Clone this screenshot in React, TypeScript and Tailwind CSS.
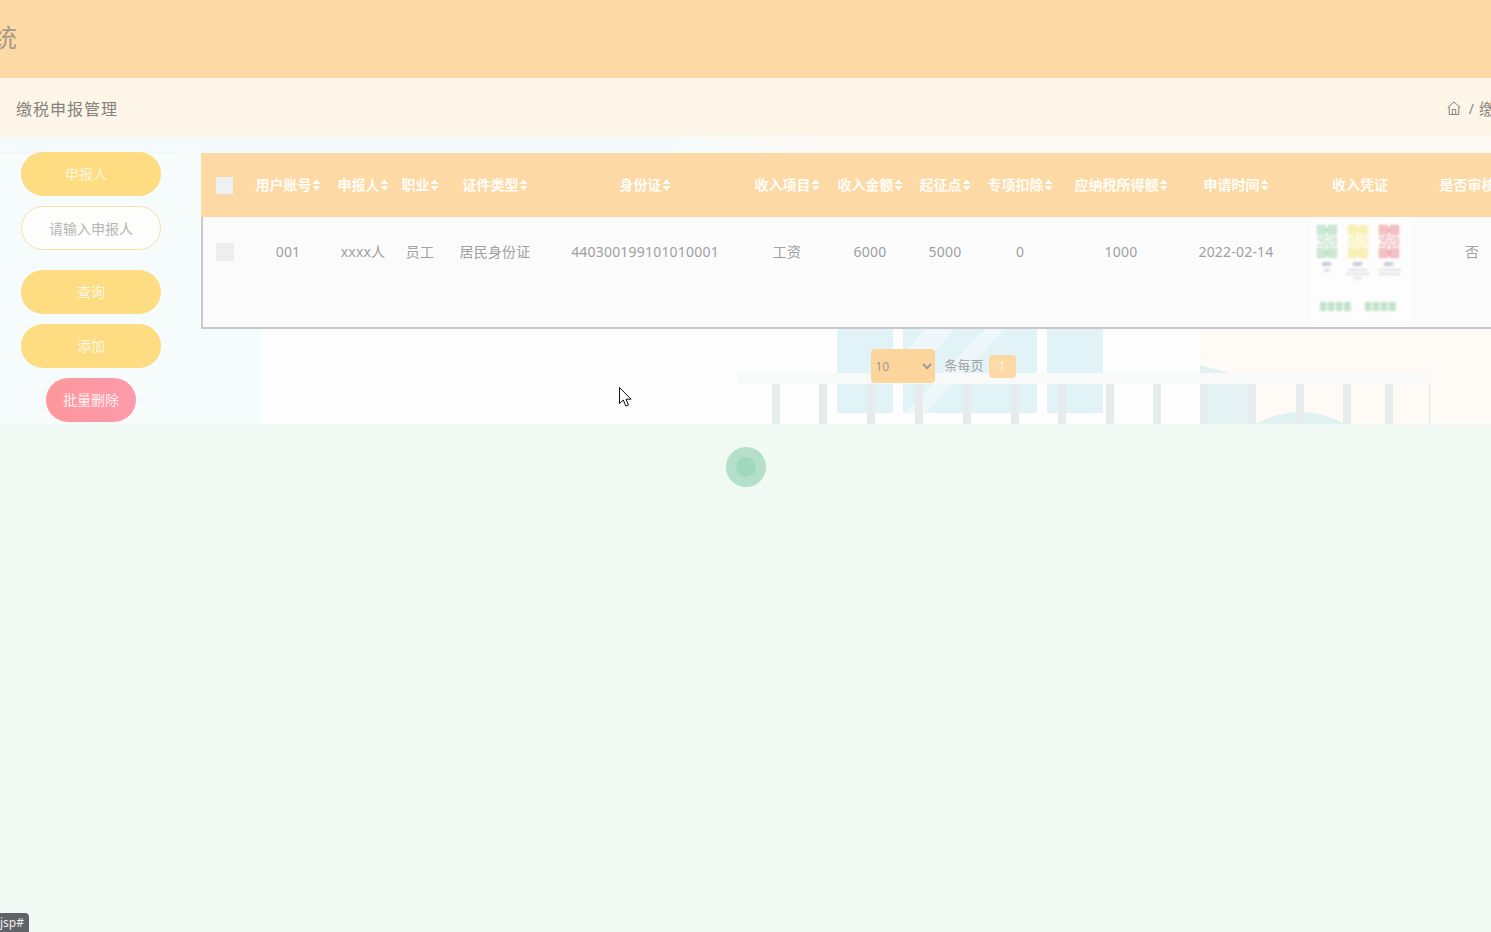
import { Fragment } from "react";

const columns = [
  { label: "用户账号", value: "001", width: "w-[82px]" },
  { label: "申报人", value: "xxxx人", width: "w-[68px]" },
  { label: "职业", value: "员工", width: "w-[46px]" },
  { label: "证件类型", value: "居民身份证", width: "w-[104px]" },
  { label: "身份证", value: "440300199101010001", width: "w-[196px]" },
  { label: "收入项目", value: "工资", width: "w-[88px]" },
  { label: "收入金额", value: "6000", width: "w-[78px]" },
  { label: "起征点", value: "5000", width: "w-[72px]" },
  { label: "专项扣除", value: "0", width: "w-[78px]" },
  { label: "应纳税所得额", value: "1000", width: "w-[124px]" },
  { label: "申请时间", value: "2022-02-14", width: "w-[106px]" },
];

const legs = [772, 819, 867, 915, 963, 1011, 1058, 1106, 1153, 1200, 1248, 1296, 1343, 1385];

function SortIcon() {
  return (
    <svg width="9" height="12" viewBox="0 0 9 12" className="inline-block align-[-1px]">
      <path d="M4.5 0.5 8.5 5H0.5Z M0.5 7H8.5L4.5 11.5Z" fill="#ffffff" />
    </svg>
  );
}

// 收入凭证里的二维码缩略图，看不清内容，只画色块
function Qr({ x, color }: { x: number; color: string }) {
  const cells = [
    [0, 0, 9, 10], [11, 0, 9, 10], [0, 23, 9, 10], [11, 23, 9, 10],
    [9, 3, 2, 4], [0, 12, 4, 2], [5, 11, 3, 3], [9, 11, 4, 2], [14, 12, 6, 2],
    [2, 15, 6, 2], [9, 15, 2, 4], [12, 15, 4, 2], [17, 15, 3, 3], [0, 19, 5, 2],
    [6, 19, 3, 3], [11, 19, 3, 3], [15, 19, 5, 2], [9, 25, 2, 6],
  ];
  return (
    <g transform={`translate(${x} 5)`} fill={color}>
      {cells.map((c, i) => (
        <Fragment key={i}>
          <rect x={c[0]} y={c[1]} width={c[2]} height={c[3]} />
          {c[2] === 9 && <rect x={c[0] + 2} y={c[1] + 2} width={5} height={6} fill="#f7f7f2" opacity="0.7" />}
          {c[2] === 9 && <rect x={c[0] + 3} y={c[1] + 3} width={3} height={4} />}
        </Fragment>
      ))}
    </g>
  );
}

function Voucher() {
  return (
    <svg width="100" height="102" viewBox="0 0 100 102" className="block">
      <rect width="100" height="102" fill="#fdfdfd" />
      <g className="blur-[0.8px]">
        <Qr x={6} color="#bfe2c8" />
        <Qr x={37} color="#f8eea6" />
        <Qr x={68} color="#f0b0b6" />
        <g fill="#c9ccd6">
          <rect x="11" y="42" width="9" height="4" />
          <rect x="42" y="42" width="9" height="4" />
          <rect x="73" y="42" width="9" height="4" />
        </g>
        <g fill="#e0e1e6">
          <rect x="13" y="49" width="6" height="3" />
          <rect x="37" y="49" width="20" height="2" />
          <rect x="35" y="53" width="24" height="2" />
          <rect x="42" y="57" width="9" height="2" />
          <rect x="67" y="49" width="23" height="2" />
          <rect x="68" y="53" width="21" height="2" />
        </g>
        <g fill="#bfe2c8">
          {[9, 17, 25, 33, 54, 62, 70, 78].map((x) => (
            <rect key={x} x={x} y="82" width="6.5" height="9" />
          ))}
        </g>
      </g>
    </svg>
  );
}

function Background() {
  return (
    <svg width="1491" height="287" viewBox="0 137 1491 287" className="absolute inset-0">
      <defs>
        <linearGradient id="strip" x1="0" x2="1" y1="0" y2="0">
          <stop offset="0.45" stopColor="#f5fbfc" />
          <stop offset="0.55" stopColor="#fdfaf6" />
        </linearGradient>
      </defs>
      <rect x="0" y="137" width="1491" height="287" fill="#f6fbfc" />
      <rect x="262" y="153" width="1229" height="271" fill="#fdfdfd" />
      <rect x="0" y="137" width="1491" height="16" fill="url(#strip)" />
      <rect x="1200" y="329" width="291" height="95" fill="#fefbf6" />
      <rect x="837" y="329" width="56" height="44" fill="#e2f3f7" />
      <rect x="903" y="329" width="134" height="44" fill="#e2f3f7" />
      <rect x="1047" y="329" width="56" height="44" fill="#e2f3f7" />
      <rect x="837" y="384" width="56" height="29" fill="#e2f3f7" />
      <rect x="903" y="384" width="134" height="29" fill="#e2f3f7" />
      <rect x="1047" y="384" width="56" height="29" fill="#e2f3f7" />
      <path d="M925 329H955L905 384H903V355Z M985 329H1005L925 413H905Z" fill="#eef8fa" />
      <rect x="738" y="373" width="692" height="11" fill="#f8f9f9" />
      <path d="M1200 365 1230 373H1200Z" fill="#e2f2f3" />
      <rect x="1200" y="384" width="56" height="40" fill="#e5f3f4" />
      <path d="M1256 424Q1300 400 1345 424Z" fill="#e0f1f2" />
      {legs.map((x) => (
        <rect key={x} x={x} y="384" width="8" height="40" fill="#e6ebec" />
      ))}
      <rect x="1429" y="384" width="1.5" height="40" fill="#e6ebec" />
    </svg>
  );
}

export default function App() {
  return (
    <div className="relative h-[932px] w-[1491px] overflow-hidden bg-[#f0f9f4] font-['Noto_Sans','Noto_Sans_CJK_SC',sans-serif]">
      <header className="flex h-[78px] items-center bg-[#fdd9a5] pb-[2px]">
        <span className="ml-[-8px] text-[25px] text-[#a89a86]">统</span>
      </header>

      <div className="flex h-[59px] w-[1591px] items-center justify-between bg-[#fdf5e8] pl-4 pr-4 pt-[2px]">
        <span className="text-base tracking-[1px] text-[#85837e]">缴税申报管理</span>
        <div className="flex items-center text-sm text-[#8a8883]">
          <svg width="14" height="15" viewBox="0 0 14 15" fill="none" stroke="#85837f" strokeWidth="1">
            <path d="M0.7 6.5 7 1l6.3 5.5M2.2 5.5V13.5H11.8V5.5M5.3 13.5V8.5H8.7V13.5" />
          </svg>
          <span className="ml-2">/</span>
          <span className="ml-[5px] text-base">缴税申报管理</span>
        </div>
      </div>

      <main className="relative h-[287px] overflow-hidden">
        <Background />
        <div className="relative flex">
          <aside className="flex w-[201px] shrink-0 flex-col items-start">
            <div className="-mb-px mt-[15px] h-px w-[182px] bg-[#f3f5f2]" />
            <div className="ml-[21px] flex h-11 w-[140px] items-center justify-center rounded-[22px] bg-[#fddc82] pr-[10px] text-sm text-[#fdf6e0]">
              申报人
            </div>
            <input
              placeholder="请输入申报人"
              className="ml-[21px] mt-2.5 h-11 w-[140px] rounded-[22px] border border-[#f5e3a8] bg-[#fdfdfc] text-center text-sm outline-none placeholder:text-[#b5b5b5]"
            />
            <button className="ml-[21px] mt-5 h-11 w-[140px] rounded-[22px] bg-[#fddc82] text-sm text-[#fdf6e0]">查询</button>
            <button className="ml-[21px] mt-2.5 h-11 w-[140px] rounded-[22px] bg-[#fddc82] text-sm text-[#fdf6e0]">添加</button>
            <button className="ml-[46px] mt-2.5 h-11 w-[90px] rounded-[22px] bg-gradient-to-r from-[#fd979c] to-[#fe9bac] text-sm text-[#fdf0f0]">
              批量删除
            </button>
          </aside>

          <section className="w-[1485px] shrink-0 pt-4">
            <table className="w-full table-fixed border-separate border-spacing-0">
              <thead>
                <tr className="h-16 bg-[#fdd9a5] text-sm font-bold text-[#fffdf8]">
                  <th className="w-[46px]">
                    <span className="block h-[17px] w-[17px] translate-x-[15px] bg-[#eef0f2]" />
                  </th>
                  {columns.map((c) => (
                    <th key={c.label} className={`${c.width} whitespace-nowrap font-bold`}>
                      {c.label}
                      <SortIcon />
                    </th>
                  ))}
                  <th className="w-[142px] font-bold">收入凭证</th>
                  <th className="w-[82px] whitespace-nowrap font-bold">
                    是否审核
                    <SortIcon />
                  </th>
                  <th className="font-bold">操作</th>
                </tr>
              </thead>
              <tbody>
                <tr className="h-[112px] bg-[#fbfbfb] text-sm text-[#a0a0a0]">
                  <td className="border-b-2 border-l-2 border-[#c9c9cd] pt-[26px] align-top">
                    <span className="block h-[18px] w-[18px] translate-x-[13px] bg-[#eeeeee]" />
                  </td>
                  {columns.map((c) => (
                    <td
                      key={c.label}
                      className="whitespace-nowrap border-b-2 border-[#c9c9cd] pt-[25px] text-center align-top tracking-[0.2px]"
                    >
                      {c.value}
                    </td>
                  ))}
                  <td className="border-b-2 border-[#c9c9cd] pt-[3px] align-top">
                    <div className="ml-[22px]">
                      <Voucher />
                    </div>
                  </td>
                  <td className="border-b-2 border-[#c9c9cd] pt-[25px] text-center align-top">否</td>
                  <td className="border-b-2 border-[#c9c9cd]" />
                </tr>
              </tbody>
            </table>

            <div className="mt-5 flex items-center justify-center">
              <select
                defaultValue="10"
                className="h-[34px] w-16 rounded bg-[#fcd59d] text-xs text-[#a09a90] outline-none"
              >
                <option value="10">10</option>
                <option value="20">20</option>
              </select>
              <span className="ml-[9px] text-[13px] text-[#a3a3a3]">条每页</span>
              <span className="ml-[5px] flex h-[23px] w-[27px] items-center justify-center rounded bg-[#fdd9a5] text-xs text-[#fdf6e8]">
                1
              </span>
            </div>
          </section>
        </div>
      </main>

      <div className="mt-[23px] flex justify-center">
        <div className="flex h-10 w-10 items-center justify-center rounded-full bg-[#b4dfc8]">
          <div className="h-5 w-5 rounded-full bg-[#a0d8bc]" />
        </div>
      </div>

      <svg width="14" height="21" viewBox="0 0 14 21" className="absolute left-[619px] top-[387px]">
        <path d="M0.5 0.5V16.5L4.3 13 6.8 19 9.5 18 7 12.2H12Z" fill="#ffffff" stroke="#111111" strokeWidth="1" />
      </svg>

      <div className="absolute bottom-0 left-0 flex h-[19px] w-[29px] items-center overflow-hidden rounded-tr-sm bg-[#5f6368] text-xs text-[#eeeeee]">
        <span>jsp#</span>
      </div>
    </div>
  );
}
